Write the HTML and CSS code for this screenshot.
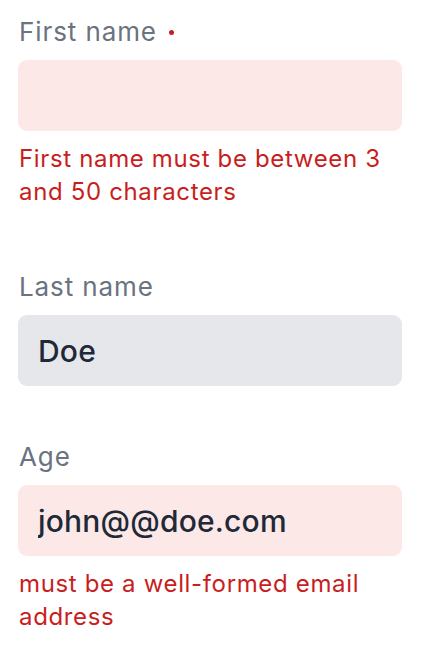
FILE: index.html
```html
<!DOCTYPE html>
<html lang="en">
<head>
  <meta charset="UTF-8">
  <meta name="viewport" content="width=device-width, initial-scale=1.0">
  <title>Form</title>
  <link rel="stylesheet" href="styles.css">
</head>
<body>
  <form class="form">
    <div class="field">
      <label class="field-label" for="firstName">First name <span class="required"></span></label>
      <input class="field-input invalid" type="text" id="firstName" value="">
      <p class="field-error">First name must be between 3 and 50 characters</p>
    </div>

    <div class="field">
      <label class="field-label" for="lastName">Last name</label>
      <input class="field-input" type="text" id="lastName" value="Doe">
    </div>

    <div class="field">
      <label class="field-label" for="age">Age</label>
      <input class="field-input invalid" type="text" id="age" value="john@@doe.com">
      <p class="field-error">must be a well-formed email address</p>
    </div>
  </form>
</body>
</html>
```

FILE: styles.css
```css
body {
    margin: 0;
    padding: 16px 30px 0 18px;
    background-color: #ffffff;
    font-family: 'Inter', 'Liberation Sans', sans-serif;
}
.form {
    display: flex;
    flex-direction: column;
}
.field {
    display: flex;
    flex-direction: column;
    margin-bottom: 55px;
}
.field-label {
    display: flex;
    align-items: center;
    gap: 12px;
    padding-left: 1px;
    font-size: 26px;
    line-height: 32px;
    letter-spacing: 0.9px;
    color: #6b7280;
    margin-bottom: 12px;
}
.required {
    width: 5px;
    height: 5px;
    margin-top: 1px;
    border-radius: 50%;
    background-color: #c81e1e;
}
.field-input {
    box-sizing: border-box;
    width: 100%;
    height: 71px;
    padding: 0 20px;
    border: none;
    border-radius: 9px;
    background-color: #e5e7eb;
    font-family: inherit;
    font-size: 30px;
    font-weight: 500;
    letter-spacing: 0.2px;
    color: #1f2937;
    outline: none;
}
.field-input.invalid {
    background-color: #fde8e8;
}
.field-error {
    margin: 11px 0 8px;
    padding-left: 1px;
    font-size: 24px;
    line-height: 33px;
    letter-spacing: 0.65px;
    color: #c81e1e;
}
```
